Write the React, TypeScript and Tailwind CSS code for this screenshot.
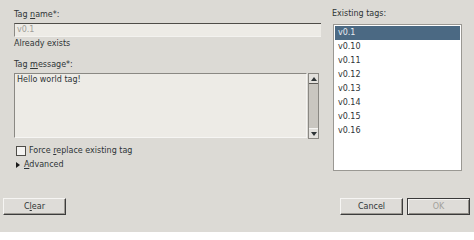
const font = { fontFamily: '"DejaVu Sans", sans-serif' };

const tags = ["v0.1", "v0.10", "v0.11", "v0.12", "v0.13", "v0.14", "v0.15", "v0.16"];

const Btn = ({ children, def = false, disabled = false }: { children: React.ReactNode; def?: boolean; disabled?: boolean }) => (
  <div
    className={`w-[63px] h-[17px] flex items-center justify-center text-[8px] bg-[#dedcd8] ${
      def
        ? "border border-[#3a3a3a] shadow-[inset_1px_1px_0_#f4f3f1,inset_-1px_-1px_0_#8f8c86]"
        : "border border-t-[#f6f5f3] border-l-[#f6f5f3] border-b-[#3c3c3c] border-r-[#3c3c3c] shadow-[inset_-1px_-1px_0_#9d9a94]"
    } ${disabled ? "text-[#a3a19c]" : "text-[#2e3436]"}`}
  >
    {children}
  </div>
);

export default function App() {
  return (
    <div style={font} className="w-[474px] h-[232px] bg-[#dcdad5] text-[#2e3436] text-[8px] flex flex-col overflow-hidden">
      <div className="flex h-[198px]">
        {/* left column */}
        <div className="pl-[14px] w-[321px] flex flex-col">
          <div className="mt-[9px] h-[12px] leading-[12px]">
            Tag <span className="underline">n</span>ame*:
          </div>
          <div className="mt-[2px] h-[14px] bg-[#edebe6] border-t border-t-[#4e4c48] border-l border-l-[#8c8a85] border-b border-b-[#f3f2ef] flex items-center pl-[2px] text-[#9f9d98]">
            v0.1
          </div>
          <div className="h-[14px] leading-[14px]">Already exists</div>
          <div className="mt-[7px] h-[14px] leading-[14px]">
            Tag <span className="underline">m</span>essage*:
          </div>
          <div className="mt-px flex gap-px">
            <div className="w-[293px] h-[65px] bg-[#edebe6] border-t border-t-[#8a8883] border-l border-l-[#8a8883] border-b border-b-[#f6f5f3] border-r border-r-[#f6f5f3] px-[2px] pt-px leading-[10px]">
              Hello world tag!
            </div>
            <div className="w-[11px] h-[66px] bg-[#c9c6c0] border border-[#8a8883] flex flex-col justify-between">
              <div className="h-[10px] bg-[#e3e1dd] border-b border-b-[#5c5a56] flex items-center justify-center">
                <svg width="6" height="4" viewBox="0 0 6 4"><path d="M0 4 L3 0 L6 4 Z" fill="#2e3436" /></svg>
              </div>
              <div className="h-[10px] bg-[#e3e1dd] border-t border-t-[#f6f5f3] flex items-center justify-center">
                <svg width="6" height="4" viewBox="0 0 6 4"><path d="M0 0 L3 4 L6 0 Z" fill="#2e3436" /></svg>
              </div>
            </div>
          </div>
          <div className="mt-[5px] h-[14px] flex items-center">
            <div className="ml-[2px] w-[10px] h-[10px] bg-[#f4f3f1] border border-[#4e4c48]" />
            <span className="ml-[3px]">
              Force <span className="underline">r</span>eplace existing tag
            </span>
          </div>
          <div className="h-[14px] flex items-center">
            <svg className="ml-[2px]" width="4" height="6" viewBox="0 0 4 6"><path d="M0 0 L4 3 L0 6 Z" fill="#1a1a1a" /></svg>
            <span className="ml-[4px]">
              <span className="underline">A</span>dvanced
            </span>
          </div>
        </div>
        {/* right column */}
        <div className="ml-[11px] w-[130px] flex flex-col">
          <div className="mt-[8px] h-[12px] leading-[12px]">Existing tags:</div>
          <div className="mt-[4px] ml-px h-[147px] bg-white border border-[#9a9893] p-px">
            {tags.map((t, i) => (
              <div
                key={t}
                className={`h-[14px] leading-[14px] pl-[3px] ${i === 0 ? "bg-[#4b6983] text-[#e8ecf2]" : "text-[#2e3436]"}`}
              >
                {t}
              </div>
            ))}
          </div>
        </div>
      </div>
      <div className="flex pl-[3px] pr-[4px]">
        <Btn>
          C<span className="underline">l</span>ear
        </Btn>
        <div className="flex-1" />
        <Btn>Cancel</Btn>
        <div className="w-[4px]" />
        <Btn def disabled>
          OK
        </Btn>
      </div>
    </div>
  );
}
